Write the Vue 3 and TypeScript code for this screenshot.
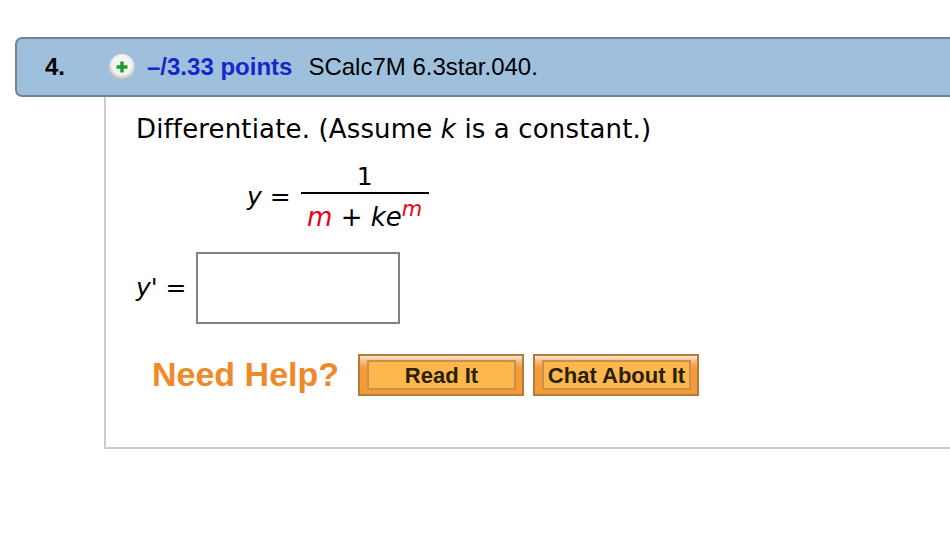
<template>
  <div class="page">
    <div class="question-head">
      <span class="num">4.</span>
      <span class="plus">
        <svg width="28" height="28" viewBox="0 0 28 28">
          <defs>
            <radialGradient id="ball" cx="50%" cy="42%" r="55%">
              <stop offset="0%" stop-color="#ffffff" />
              <stop offset="70%" stop-color="#f1f1ee" />
              <stop offset="100%" stop-color="#b9bdb9" />
            </radialGradient>
          </defs>
          <circle cx="14" cy="14" r="13" fill="url(#ball)" />
          <path d="M12.3 8.5h3.4v3.8h3.8v3.4h-3.8v3.8h-3.4v-3.8H8.5v-3.4h3.8z" fill="#1f9a2e" />
        </svg>
      </span>
      <span class="points">–/3.33 points</span>
      <span class="source">SCalc7M 6.3star.040.</span>
    </div>
    <div class="question-body">
      <p class="prompt">Differentiate. (Assume <i>k</i> is a constant.)</p>
      <div class="equation">
        <span class="lhs"><i>y</i> =</span>
        <div class="frac">
          <div class="top">1</div>
          <div class="bottom"><i class="red">m</i> + <i>ke</i><sup class="red"><i>m</i></sup></div>
        </div>
      </div>
      <div class="answer">
        <span class="lhs2"><i>y'</i> =</span>
        <input type="text" class="answer-box" />
      </div>
      <div class="help">
        <span class="need">Need Help?</span>
        <button v-for="b in buttons" :key="b.label" class="help-btn" :class="b.cls"><span>{{ b.label }}</span></button>
      </div>
    </div>
  </div>
</template>

<script setup lang="ts">
const buttons = [
  { label: 'Read It', cls: 'read' },
  { label: 'Chat About It', cls: 'chat' }
]
</script>

<style scoped>
.page {
  width: 950px;
  height: 542px;
  overflow: hidden;
  padding-top: 37px;
  box-sizing: border-box;
  font-family: "DejaVu Sans", Verdana, sans-serif;
  color: #000;
}
.question-head {
  margin-left: 15px;
  height: 60px;
  box-sizing: border-box;
  background: #9fc0dc;
  border: 2px solid #6f8494;
  border-right: none;
  border-radius: 7px 0 0 7px;
  display: flex;
  align-items: center;
  font-family: "Liberation Sans", Arial, sans-serif;
  font-size: 24px;
}
.num {
  font-weight: bold;
  margin-left: 28px;
  width: 63px;
}
.plus {
  width: 28px;
  height: 28px;
  margin-right: 11px;
  display: flex;
}
.points {
  font-weight: bold;
  color: #1428c8;
  margin-right: 16px;
}
.question-body {
  margin-left: 104px;
  height: 352px;
  box-sizing: border-box;
  border-left: 2px solid #cccccc;
  border-bottom: 2px solid #cccccc;
  padding: 16px 0 0 30px;
}
.prompt {
  margin: 0;
  font-size: 26px;
  line-height: 32px;
  letter-spacing: 0.15px;
}
.equation {
  margin: 16px 0 0 111px;
  display: flex;
  align-items: center;
  gap: 10px;
  font-size: 26px;
}
.lhs {
  font-size: 25px;
  margin-bottom: 8px;
}
.frac {
  text-align: center;
  width: 128px;
}
.top {
  font-size: 25px;
  line-height: 31px;
  border-bottom: 2px solid #000;
}
.bottom {
  line-height: 46px;
  white-space: nowrap;
}
.red {
  color: #f00018;
}
sup {
  font-size: 21px;
  line-height: 0;
  vertical-align: 10px;
}
.answer {
  margin-top: 12px;
  display: flex;
  align-items: center;
  gap: 10px;
  font-size: 25px;
}
.lhs2 {
  margin-bottom: 2px;
  width: 50px;
  white-space: nowrap;
}
.answer-box {
  width: 204px;
  height: 72px;
  box-sizing: border-box;
  border: 2px solid #808080;
  background: #fff;
  padding: 0;
  margin: 0;
}
.help {
  margin: 30px 0 0 16px;
  display: flex;
  align-items: center;
}
.need {
  font-family: "Liberation Sans", Arial, sans-serif;
  font-weight: bold;
  font-size: 34px;
  color: #ef8a2a;
  width: 206px;
  margin-bottom: 2px;
}
.help-btn {
  height: 42px;
  box-sizing: border-box;
  padding: 4px 6px 4px 7px;
  border: 2px solid #b87a3c;
  background: linear-gradient(#f6e6d6 0, #f6bd85 5px, #f59a38 12px);
  font-family: "Liberation Sans", Arial, sans-serif;
  font-weight: bold;
  font-size: 22px;
  color: #2a2008;
  display: flex;
  overflow: hidden;
}
.help-btn span {
  flex: 1;
  border: 2px solid #c8924e;
  background: #fdb84d;
  display: flex;
  align-items: center;
  justify-content: center;
  line-height: 1;
  white-space: nowrap;
  padding-top: 1px;
}
.read {
  width: 166px;
  margin-right: 9px;
}
.chat {
  width: 166px;
}
</style>
